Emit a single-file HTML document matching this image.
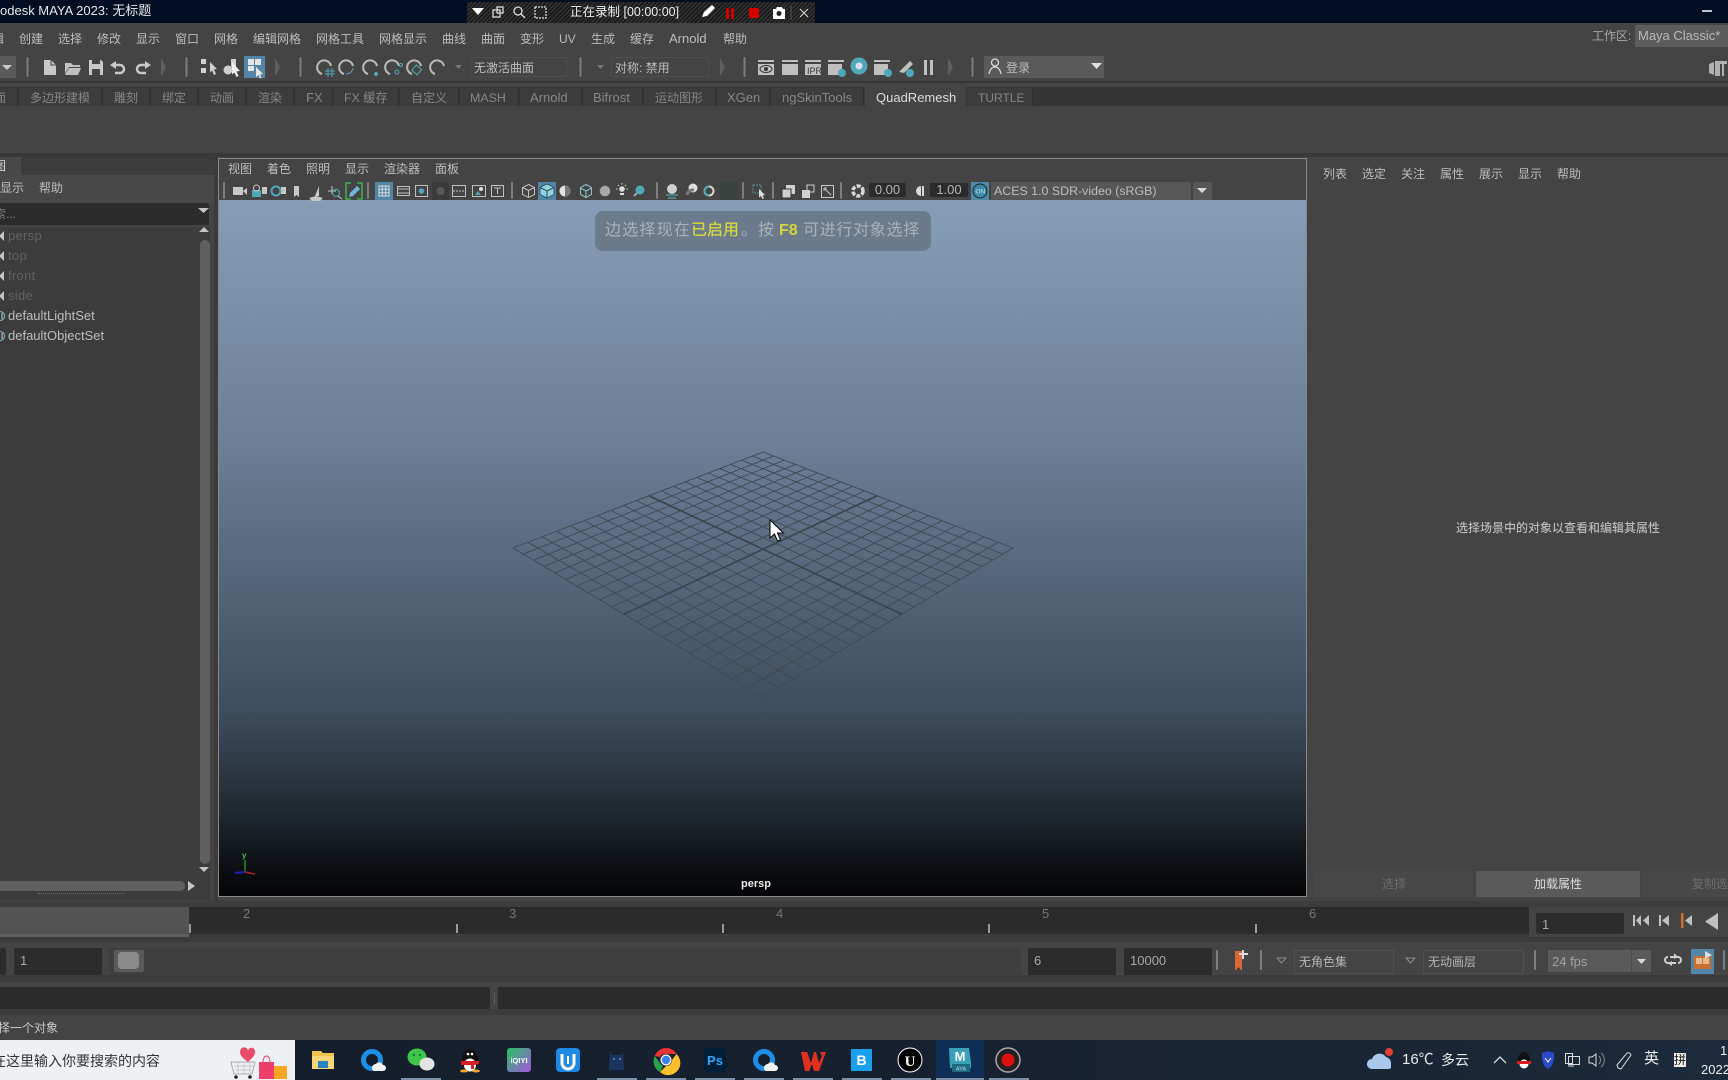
<!DOCTYPE html>
<html lang="zh"><head><meta charset="utf-8"><title>Autodesk MAYA 2023</title>
<style>
html,body{margin:0;padding:0;background:#444}
#p{position:relative;width:1728px;height:1080px;overflow:hidden;background:#444;font-family:"Liberation Sans","Noto Sans CJK SC",sans-serif;font-size:12px;color:#bdbdbd}
.b{position:absolute}
.t{position:absolute;white-space:nowrap;line-height:20px;height:20px}
.c{font-size:13px}
.tab{position:absolute;top:88px;height:18px;background:#3c3c3c;border-right:1px solid #2f2f2f;box-sizing:border-box}
.tl{position:absolute;top:88px;white-space:nowrap;line-height:20px;font-size:13px;color:#868686}
.f{position:absolute;background:#2c2c2c;border-radius:2px;box-sizing:border-box;color:#a8a8a8;font-size:13px;line-height:26px;padding-left:6px}
.o{position:absolute;left:8px;font-size:13px;line-height:18px;white-space:nowrap}
.h{position:absolute;top:221px;white-space:nowrap;line-height:20px;height:20px;font-size:16px;color:#a9b1b9}
.y{color:#d6d63c}
</style></head><body><div id="p">

<!-- title bar -->
<div class="b" style="left:0;top:0;width:1728px;height:23px;background:#000d22"></div>
<div class="t" style="left:0;top:1px;font-size:13px;color:#e8e8e8">odesk MAYA 2023: 无标题</div>
<div class="b" style="left:467px;top:2px;width:348px;height:21px;background:repeating-linear-gradient(135deg,#3a3a3a 0 1px,#1b1b1b 1px 3px)"></div>
<div class="t" style="left:570px;top:2px;font-size:12.500px;color:#eee">正在录制 [00:00:00]</div>

<!-- menu -->
<div class="t" style="left:-8px;top:29px">辑</div>
<div class="t" style="left:19px;top:29px">创建</div><div class="t" style="left:58px;top:29px">选择</div><div class="t" style="left:97px;top:29px">修改</div><div class="t" style="left:136px;top:29px">显示</div><div class="t" style="left:175px;top:29px">窗口</div><div class="t" style="left:214px;top:29px">网格</div><div class="t" style="left:253px;top:29px">编辑网格</div><div class="t" style="left:316px;top:29px">网格工具</div><div class="t" style="left:379px;top:29px">网格显示</div><div class="t" style="left:442px;top:29px">曲线</div><div class="t" style="left:481px;top:29px">曲面</div><div class="t" style="left:520px;top:29px">变形</div><div class="t" style="left:559px;top:29px">UV</div><div class="t" style="left:591px;top:29px">生成</div><div class="t" style="left:630px;top:29px">缓存</div><div class="t" style="left:669px;top:29px;font-size:13px">Arnold</div><div class="t" style="left:723px;top:29px">帮助</div>
<div class="t" style="left:1592px;top:26px;color:#a8a8a8">工作区:</div>
<div class="b" style="left:1635px;top:25px;width:93px;height:22px;background:#5c5c5c"></div>
<div class="t" style="left:1638px;top:26px;font-size:13px;color:#b8b8b8">Maya Classic*</div>

<!-- toolbar -->
<div class="b" style="left:0;top:56px;width:16px;height:22px;background:#5a5a5a"></div>
<div class="b" style="left:244px;top:56px;width:21px;height:22px;background:#5285a6"></div>
<div class="b" style="left:470px;top:57px;width:97px;height:20px;background:#444;border:1px solid #4e4e4e;box-sizing:border-box"></div>
<div class="t" style="left:474px;top:58px">无激活曲面</div>
<div class="b" style="left:611px;top:57px;width:98px;height:20px;background:#444;border:1px solid #4e4e4e;box-sizing:border-box"></div>
<div class="t" style="left:615px;top:58px">对称: 禁用</div>
<div class="b" style="left:984px;top:56px;width:120px;height:22px;background:#5a5a5a"></div>
<div class="t" style="left:1006px;top:58px">登录</div>
<div class="b" style="left:0;top:81px;width:1728px;height:2px;background:#363636"></div>

<!-- shelf tabs -->
<div class="b" style="left:0;top:87px;width:1728px;height:19px;background:#353535"></div>
<div class="tab" style="left:0;width:18px"></div><div class="tab" style="left:19px;width:83px"></div><div class="tab" style="left:103px;width:47px"></div><div class="tab" style="left:151px;width:47px"></div><div class="tab" style="left:199px;width:47px"></div><div class="tab" style="left:247px;width:47px"></div><div class="tab" style="left:295px;width:38px"></div><div class="tab" style="left:334px;width:65px"></div><div class="tab" style="left:400px;width:59px"></div><div class="tab" style="left:460px;width:59px"></div><div class="tab" style="left:520px;width:62px"></div><div class="tab" style="left:583px;width:60px"></div><div class="tab" style="left:644px;width:72px"></div><div class="tab" style="left:717px;width:53px"></div><div class="tab" style="left:771px;width:93px"></div>
<div class="tab" style="left:865px;width:101px;background:#444;top:87px;height:19px;border:0"></div>
<div class="tab" style="left:967px;width:66px"></div>
<div class="tl" style="left:-6px;font-size:12px">面</div><div class="tl" style="left:30px;font-size:12px">多边形建模</div><div class="tl" style="left:114px;font-size:12px">雕刻</div><div class="tl" style="left:162px;font-size:12px">绑定</div><div class="tl" style="left:210px;font-size:12px">动画</div><div class="tl" style="left:258px;font-size:12px">渲染</div><div class="tl" style="left:306px">FX</div><div class="tl" style="left:344px;font-size:12.300px">FX 缓存</div><div class="tl" style="left:411px;font-size:12px">自定义</div><div class="tl" style="left:470px;font-size:12.400px">MASH</div><div class="tl" style="left:530px">Arnold</div><div class="tl" style="left:593px">Bifrost</div><div class="tl" style="left:655px;font-size:12px">运动图形</div><div class="tl" style="left:727px">XGen</div><div class="tl" style="left:782px">ngSkinTools</div><div class="tl" style="left:876px;color:#dcdcdc">QuadRemesh</div><div class="tl" style="left:978px;font-size:12px">TURTLE</div>
<div class="b" style="left:0;top:153px;width:1728px;height:4px;background:#383838"></div>

<!-- outliner -->
<div class="b" style="left:0;top:157px;width:214px;height:18px;background:#3c3c3c"></div>
<div class="b" style="left:0;top:157px;width:21px;height:18px;background:#484848"></div>
<div class="t" style="left:-6px;top:156px;color:#ddd">图</div>
<div class="b" style="left:0;top:175px;width:214px;height:28px;background:#484848"></div>
<div class="t" style="left:0;top:178px">显示</div><div class="t" style="left:39px;top:178px">帮助</div>
<div class="b" style="left:0;top:203px;width:209px;height:22px;background:#2b2b2b;border-radius:0 2px 2px 0"></div>
<div class="t" style="left:-6px;top:204px;color:#7a7a7a">索...</div>
<div class="b" style="left:0;top:227px;width:210px;height:673px;background:#3c3c3c"></div>
<div class="o" style="top:227px;color:#626262;letter-spacing:.3px">persp</div><div class="o" style="top:247px;color:#626262;letter-spacing:.3px">top</div><div class="o" style="top:267px;color:#626262;letter-spacing:.3px">front</div><div class="o" style="top:287px;color:#626262;letter-spacing:.3px">side</div><div class="o" style="top:307px;color:#bdbdbd">defaultLightSet</div><div class="o" style="top:327px;color:#bdbdbd">defaultObjectSet</div>
<div class="b" style="left:200px;top:240px;width:10px;height:624px;background:#5f5f5f;border-radius:5px"></div>
<div class="b" style="left:0;top:881px;width:185px;height:10px;background:#5f5f5f;border-radius:0 5px 5px 0"></div>
<div class="b" style="left:38px;top:893px;width:86px;height:0;border-top:1px dotted #6b6b6b"></div>
<div class="b" style="left:214px;top:153px;width:4px;height:748px;background:#3b3b3b"></div>

<!-- viewport -->
<div class="b" style="left:218px;top:158px;width:1089px;height:739px;border:1px solid #888;box-sizing:border-box;background:#444"></div>
<div class="b" style="left:219px;top:200px;width:1087px;height:696px;background:linear-gradient(#879db7 0%,#6b7f96 35%,#3f4e5e 73%,#1f2830 88%,#030405 100%)"></div>
<div class="t" style="left:228px;top:159px">视图</div><div class="t" style="left:267px;top:159px">着色</div><div class="t" style="left:306px;top:159px">照明</div><div class="t" style="left:345px;top:159px">显示</div><div class="t" style="left:384px;top:159px">渲染器</div><div class="t" style="left:435px;top:159px">面板</div>
<div class="b" style="left:375px;top:182px;width:18px;height:18px;background:#5285a6"></div>
<div class="b" style="left:432px;top:182px;width:17px;height:18px;background:#3a3a3a"></div>
<div class="b" style="left:538px;top:182px;width:18px;height:18px;background:#5285a6"></div>
<div class="b" style="left:720px;top:182px;width:18px;height:18px;background:#3a4340"></div>
<div class="b" style="left:869px;top:183px;width:37px;height:14px;background:#2b2b2b;border-radius:2px;color:#b5b5b5;font-size:13px;line-height:14px;text-align:center">0.00</div>
<div class="b" style="left:930px;top:183px;width:38px;height:14px;background:#2b2b2b;border-radius:2px;color:#b5b5b5;font-size:13px;line-height:14px;text-align:center">1.00</div>
<div class="b" style="left:971px;top:182px;width:18px;height:18px;background:#4f8aa8"></div>
<div class="b" style="left:991px;top:182px;width:200px;height:18px;background:#575757"></div>
<div class="b" style="left:1193px;top:182px;width:19px;height:18px;background:#575757"></div>
<div class="t" style="left:994px;top:181px;font-size:12.400px;color:#bdbdbd">ACES 1.0 SDR-video (sRGB)</div>
<div class="b" style="left:595px;top:211px;width:336px;height:40px;background:#6b7b8c;border-radius:8px"></div>
<div class="h" style="left:605px;letter-spacing:1.200px">边选择现在</div>
<div class="h y" style="left:691px;font-weight:500">已启用</div>
<div class="h" style="left:741px">。</div>
<div class="h" style="left:758px">按</div>
<div class="h y" style="left:779px;font-weight:bold">F8</div>
<div class="h" style="left:803px;letter-spacing:.7px">可进行对象选择</div>
<div class="t" style="left:741px;top:874px;font-size:11px;font-weight:bold;color:#e8e8e8">persp</div>

<!-- attribute panel -->
<div class="t" style="left:1323px;top:164px">列表</div><div class="t" style="left:1362px;top:164px">选定</div><div class="t" style="left:1401px;top:164px">关注</div><div class="t" style="left:1440px;top:164px">属性</div><div class="t" style="left:1479px;top:164px">展示</div><div class="t" style="left:1518px;top:164px">显示</div><div class="t" style="left:1557px;top:164px">帮助</div>
<div class="t" style="left:1456px;top:518px;color:#b8b8b8;font-weight:500">选择场景中的对象以查看和编辑其属性</div>
<div class="b" style="left:1315px;top:871px;width:158px;height:26px;background:#484848"></div>
<div class="b" style="left:1476px;top:871px;width:164px;height:26px;background:#5a5a5a"></div>
<div class="b" style="left:1643px;top:871px;width:85px;height:26px;background:#484848"></div>
<div class="t" style="left:1382px;top:874px;color:#6d6d6d">选择</div><div class="t" style="left:1534px;top:874px;color:#ddd">加载属性</div><div class="t" style="left:1692px;top:874px;color:#6d6d6d">复制选项卡</div>

<!-- bottom bands -->
<div class="b" style="left:0;top:901px;width:1728px;height:6px;background:#3d3d3d"></div>
<div class="b" style="left:0;top:907px;width:1529px;height:27px;background:#2b2b2b"></div>
<div class="b" style="left:189px;top:934px;width:1340px;height:3px;background:#3c3c3c"></div>
<div class="b" style="left:0;top:907px;width:189px;height:30px;background:linear-gradient(#535353 0 27px,#5e5e5e 27px)"></div>
<div class="t" style="left:243px;top:904px;font-size:13px;color:#757575">2</div><div class="t" style="left:509px;top:904px;font-size:13px;color:#757575">3</div><div class="t" style="left:776px;top:904px;font-size:13px;color:#757575">4</div><div class="t" style="left:1042px;top:904px;font-size:13px;color:#757575">5</div><div class="t" style="left:1309px;top:904px;font-size:13px;color:#757575">6</div>
<div class="b" style="left:189px;top:924px;width:2px;height:9px;background:#999"></div><div class="b" style="left:456px;top:924px;width:2px;height:9px;background:#999"></div><div class="b" style="left:722px;top:924px;width:2px;height:9px;background:#999"></div><div class="b" style="left:988px;top:924px;width:2px;height:9px;background:#999"></div><div class="b" style="left:1255px;top:924px;width:2px;height:9px;background:#999"></div>
<div class="f" style="left:1536px;top:913px;width:88px;height:21px;line-height:23px">1</div>
<div class="b" style="left:0;top:937px;width:1728px;height:5px;background:#3b3b3b"></div>

<div class="f" style="left:0;top:948px;width:6px;height:27px"></div>
<div class="f" style="left:14px;top:948px;width:88px;height:27px">1</div>
<div class="b" style="left:109px;top:948px;width:912px;height:27px;background:#3f3f3f"></div>
<div class="b" style="left:114px;top:950px;width:30px;height:22px;background:#5a5a5a;border-radius:2px"></div>
<div class="b" style="left:118px;top:952px;width:21px;height:17px;background:#8a8a8a;border-radius:4px"></div>
<div class="f" style="left:1028px;top:948px;width:88px;height:27px">6</div>
<div class="f" style="left:1124px;top:948px;width:88px;height:27px">10000</div>
<div class="b" style="left:1294px;top:950px;width:100px;height:24px;border:1px solid #505050;box-sizing:border-box"></div>
<div class="t" style="left:1299px;top:952px;color:#b5b5b5">无角色集</div>
<div class="b" style="left:1423px;top:950px;width:101px;height:24px;border:1px solid #505050;box-sizing:border-box"></div>
<div class="t" style="left:1428px;top:952px;color:#b5b5b5">无动画层</div>
<div class="b" style="left:1548px;top:950px;width:103px;height:22px;background:#5a5a5a"></div>
<div class="b" style="left:1631px;top:950px;width:1px;height:22px;background:#4a4a4a"></div>
<div class="t" style="left:1552px;top:952px;font-size:13px;color:#a3a3a3">24 fps</div>
<div class="b" style="left:1691px;top:949px;width:23px;height:25px;background:#5285a6"></div>
<div class="b" style="left:0;top:975px;width:1728px;height:7px;background:#3c3c3c"></div>
<div class="b" style="left:0;top:987px;width:490px;height:22px;background:#2b2b2b;border-radius:0 2px 2px 0"></div>
<div class="b" style="left:498px;top:987px;width:1230px;height:22px;background:#2b2b2b"></div>
<div class="b" style="left:494px;top:992px;height:11px;width:0;border-left:1px dotted #777"></div>
<div class="b" style="left:0;top:1009px;width:1728px;height:6px;background:#3c3c3c"></div>
<div class="t" style="left:-14px;top:1018px;color:#c8c8c8">选择一个对象</div>

<!-- taskbar -->
<div class="b" style="left:0;top:1040px;width:1728px;height:40px;background:linear-gradient(90deg,#141d2b,#17212f 60%,#1c2a3b)"></div>
<div class="b" style="left:0;top:1040px;width:295px;height:40px;background:#eef1f4"></div>
<div class="t" style="left:-8px;top:1051px;font-size:14px;color:#333">在这里输入你要搜索的内容</div>
<div class="b" style="left:936px;top:1040px;width:48px;height:40px;background:#0f2e55"></div>
<div class="t" style="left:1402px;top:1050px;font-size:15px;color:#e8e8e8">16℃</div>
<div class="t" style="left:1441px;top:1050px;font-size:14px;color:#e8e8e8">多云</div>
<div class="t" style="left:1644px;top:1049px;font-size:15px;color:#eee">英</div>
<div class="t" style="left:1674px;top:1050px;font-size:12px;color:#111;background:#eee;line-height:14px;height:14px;margin-top:3px;padding:0 0">拼</div>
<div class="t" style="left:1720px;top:1041px;font-size:13px;color:#eee">17</div>
<div class="t" style="left:1701px;top:1060px;font-size:13px;color:#eee">2022</div>

<!-- vector overlay -->
<svg class="b" style="left:0;top:0" width="1728" height="1080" viewBox="0 0 1728 1080" xmlns="http://www.w3.org/2000/svg">
<defs>
<g id="g" fill="none">
<path stroke="#3f4952" stroke-width=".9" d="M763 452L513 548M773.6 456.1L523.1 554M784.3 460.2L533.4 560.2M795.2 464.4L543.9 566.4M806.3 468.6L554.7 572.8M817.6 473L565.6 579.4M829.1 477.4L576.8 586M840.7 481.8L588.3 592.9M852.6 486.4L600 599.8M864.7 491L611.9 606.9M889.5 500.6L636.6 621.7M902.2 505.5L649.4 629.3M915.2 510.4L662.4 637.1M928.4 515.5L675.8 645M941.9 520.7L689.5 653.2M955.6 525.9L703.5 661.5M969.5 531.3L717.8 670.1M983.7 536.8L732.5 678.8M998.2 542.3L747.6 687.8M1013 548L763 697"/>
<path stroke="#3c444c" stroke-width="1.700" d="M877 495.8L624.1 614.2"/>
</g>
<g id="q"><circle r="8.500" fill="none" stroke="#1e8fe8" stroke-width="5"/><path d="M1 10a4 4 0 0 1 4-4a4 4 0 0 1 7 1a3 3 0 0 1 0 6H3a3 3 0 0 1-2-3z" fill="#f2f2f2" transform="translate(-1 -2)"/></g>
</defs>
<use href="#g"/><use href="#g" transform="matrix(-1 0 0 1 1526 0)"/>
<path d="M770 520v18l4.500-4 3 7 3-1.200-3-6.800h6z" fill="#fff" stroke="#000" stroke-width="1"/>

<!-- record bar icons -->
<path d="M472 8h12l-6 7z" fill="#fff"/>
<g fill="none" stroke="#ddd" stroke-width="1.300"><rect x="493" y="10" width="7" height="7"/><rect x="497" y="7" width="6" height="6"/><circle cx="518" cy="11" r="4"/><path d="M521 14l4 4"/><path stroke-dasharray="2 1" d="M535 7h11v11h-11z"/></g>
<path d="M702 17l2-5 8-7 3 3-8 8z" fill="#fff"/>
<rect x="726" y="8" width="3" height="11" fill="#c00"/><rect x="731" y="8" width="3" height="11" fill="#c00"/><rect x="749" y="8" width="10" height="10" fill="#d40000"/>
<path d="M773 9h3l1-2h5l1 2h2v10h-12z" fill="#fff"/><circle cx="779" cy="13.500" r="2.500" fill="#222"/>
<path d="M791 6v14" stroke="#555"/><path d="M800 9l8 8M808 9l-8 8" stroke="#ddd"/>
<path d="M1702 11h10" stroke="#fff" stroke-width="1.500"/>

<!-- toolbar -->
<path d="M2 65h10l-5 5z" fill="#c8c8c8"/>
<g fill="#7d7d7d"><rect x="26.500" y="57" width="2" height="20" rx="1"/><rect x="185.500" y="57" width="2" height="20" rx="1"/><rect x="299.500" y="57" width="2" height="20" rx="1"/><rect x="579.500" y="57" width="2" height="20" rx="1"/><rect x="743.500" y="57" width="2" height="20" rx="1"/><rect x="971.500" y="57" width="2" height="20" rx="1"/></g>
<g fill="#5f5f5f"><path d="M161 58l5 9-5 9zM275 58l5 9-5 9zM720 58l5 9-5 9zM948 58l5 9-5 9z"/></g>
<path d="M44 60h7l5 5v10H44z" fill="#c8c8c8"/><path d="M51 60v5h5" fill="none" stroke="#444"/>
<path d="M65 63h6l2 2h7v2H69l-4 7zM65 75l4-7h12l-3 7z" fill="#c0c0c0"/>
<path d="M89 60h12l2 2v13H89z" fill="#c8c8c8"/><rect x="92" y="60" width="8" height="4" fill="#444"/><rect x="92" y="69" width="8" height="6" fill="#444"/>
<path d="M113 65h7a4 4 0 0 1 0 8h-5" fill="none" stroke="#c8c8c8" stroke-width="2.500"/><path d="M116 61v8l-6-4z" fill="#c8c8c8"/>
<path d="M148 65h-7a4 4 0 0 0 0 8h5" fill="none" stroke="#c8c8c8" stroke-width="2.500"/><path d="M145 61v8l6-4z" fill="#c8c8c8"/>
<g fill="#d0d0d0"><rect x="201" y="59" width="5" height="5"/><rect x="201" y="68" width="5" height="5"/><path d="M210 62l7 7-3 .5 2 4.500-2 1-2-4.500-2 2z"/><circle cx="228" cy="70" r="4.500"/><rect x="231" y="59" width="5" height="8"/><path d="M232 62l8 9-3.500 .5 2 4.500-2 1-2-4.500-2.500 2z" fill="#eee"/></g>
<g fill="#e4e4e4"><rect x="248" y="59" width="6" height="6"/><rect x="255" y="59" width="6" height="6"/><rect x="248" y="66" width="6" height="5"/><path d="M256 67l7 7-3 .5 1.500 3.500-1.500 .5-1.500-3.500-2.500 2z"/></g>
<g fill="none" stroke="#b8b8b8" stroke-width="2"><path d="M322 74a7 7 0 1 1 9-8"/><path d="M344 74a7 7 0 1 1 9-8"/><path d="M368 74a7 7 0 1 1 9-8"/><path d="M390 74a7 7 0 1 1 9-8"/><path d="M412 74a7 7 0 1 1 9-8"/><path d="M435 74a7 7 0 1 1 9-8"/></g>
<g fill="none" stroke="#4fa8b8" stroke-width="1"><path d="M328 68v9M332 68v9M325 71h10M325 74h10"/><path d="M346 74c4 0 6-2 7-6"/><circle cx="376" cy="74" r="1.500" fill="#4fa8b8"/><circle cx="397" cy="72" r="2"/><circle cx="401" cy="65" r="1.500"/><rect x="413" y="66" width="7" height="7" transform="rotate(40 416 70)"/></g>
<path d="M455 65h7l-3.500 4zM597 65h7l-3.500 4z" fill="#777"/>
<!-- render icons -->
<g fill="#c0c0c0"><path d="M758 60h16v2h-16zM782 60h16v2h-16zM805 60h16v2h-16zM828 60h16v2h-16zM874 60h16v2h-16z"/><rect x="758" y="64" width="16" height="11"/><rect x="782" y="64" width="16" height="11"/><rect x="805" y="64" width="16" height="11"/><rect x="828" y="64" width="14" height="11"/><rect x="874" y="64" width="14" height="11"/><rect x="924" y="60" width="3" height="15"/><rect x="930" y="60" width="3" height="15"/></g>
<ellipse cx="766" cy="69" rx="6" ry="3.500" fill="none" stroke="#333"/><circle cx="766" cy="69" r="2" fill="#333"/>
<text x="807" y="74" font-size="9" font-family="Liberation Sans" fill="#333">IPR</text>
<circle cx="842" cy="73" r="4" fill="#4fa8b8"/><circle cx="888" cy="73" r="4" fill="#4fa8b8"/>
<circle cx="859" cy="66" r="8.500" fill="#4fa8b8"/><circle cx="859" cy="66" r="3.500" fill="#dde"/>
<path d="M899 72l11-11 3 3-9 9z" fill="#c0c0c0"/><circle cx="910" cy="73" r="4" fill="#4fa8b8"/>
<circle cx="995" cy="62.500" r="3.500" fill="none" stroke="#ddd" stroke-width="1.200"/><path d="M989 74c1-5 3-7 6-7s5 2 6 7" fill="none" stroke="#ddd" stroke-width="1.200"/>
<path d="M1091 63h11l-5.500 6z" fill="#e0e0e0"/>
<!-- far right -->
<g fill="#b0b0b0"><path d="M1715 61h12v3h-3v12h-2V64h-2v12h-5z"/><path d="M1709 64l5-2v13l-5-2z"/></g>
<!-- outliner -->
<path d="M198 208h11l-5.500 5zM199 232l5-5 5 5zM199 867l5 5 5-5zM188 881l7 5-7 5z" fill="#c4c4c4"/>
<path d="M-1 236l5-5v10zM-1 256l5-5v10zM-1 276l5-5v10zM-1 296l5-5v10z" fill="#c4c4c4"/>
<g fill="none" stroke="#6fa5b8" stroke-width="1.300"><circle cx="0" cy="316" r="4.500"/><circle cx="0" cy="336" r="4.500"/></g>
<path d="M2 313v6M2 333v6" stroke="#ccc"/>
<!-- viewport icons -->
<g fill="#7d7d7d"><rect x="223" y="182" width="2" height="17" rx="1"/><rect x="367" y="182" width="2" height="17" rx="1"/><rect x="511" y="182" width="2" height="17" rx="1"/><rect x="656" y="182" width="2" height="17" rx="1"/><rect x="742" y="182" width="2" height="17" rx="1"/><rect x="772" y="182" width="2" height="17" rx="1"/><rect x="840" y="182" width="2" height="17" rx="1"/></g>
<g fill="#c8c8c8"><rect x="233" y="187" width="10" height="8"/><path d="M243 191l4-3v7z"/><rect x="262" y="187" width="5" height="7"/><rect x="281" y="187" width="5" height="7"/><path d="M294 186h5v11l-2.500-2-2.500 2z"/><path d="M309 198l7-2 7 2-3 3h-8zM315 196l4-10v10z"/></g>
<rect x="252" y="190" width="9" height="7" fill="#4fa8b8"/><circle cx="256.500" cy="188" r="3" fill="none" stroke="#c8c8c8"/><circle cx="276" cy="191" r="4.500" fill="none" stroke="#4fa8b8" stroke-width="2"/>
<path d="M328 191h8M332 186v8" stroke="#ccc"/><circle cx="336" cy="193" r="3.500" fill="none" stroke="#4fa8b8"/><path d="M338 196l4 3" stroke="#ccc"/>
<path d="M351 183h-5v16h5M357 183h5v16h-5" fill="none" stroke="#3ec44a" stroke-width="1.300"/><path d="M349 197l1-4 7-7 3 3-7 7z" fill="#6fb6d8"/>
<g fill="none" stroke="#d8d8d8"><path d="M379 186h10v10h-10zM382.300 186v10M385.700 186v10M379 189.300h10M379 192.700h10"/></g>
<g fill="none" stroke="#c0c0c0"><rect x="397.500" y="186.500" width="12" height="9"/><path d="M397 189h13M397 193h13"/><rect x="415.500" y="185.500" width="12" height="11"/><rect x="452.500" y="185.500" width="13" height="11"/><rect x="472.500" y="185.500" width="13" height="11"/><rect x="491.500" y="185.500" width="12" height="11"/><path d="M494 188h7M497.500 188v6"/><path stroke-dasharray="2 1" d="M453 191h12"/></g>
<circle cx="421.500" cy="191" r="2.800" fill="#4fa8b8"/><circle cx="440.500" cy="191" r="4" fill="#5a5a5a"/><path d="M475 195l3-4 3 4z" fill="#4fa8b8"/><circle cx="481" cy="189" r="2" fill="#ddd"/>
<g fill="none" stroke="#c4c4c4"><path d="M528.500 184.500l6 3v7l-6 3-6-3v-7zM522.500 187.500l6 3 6-3M528.500 190.500v7"/></g>
<path d="M547 184l7 3.500v7l-7 3.500-7-3.500v-7z" fill="#8fd4e0" stroke="#123" stroke-width=".6"/><path d="M540 187.500l7 3.500 7-3.500M547 191v7" fill="none" stroke="#345"/>
<circle cx="565" cy="191" r="5.500" fill="#e0e0e0"/><path d="M565 185.500a5.500 5.500 0 0 1 0 11z" fill="#777"/>
<g fill="none" stroke="#8fc0cc"><path d="M586 184.500l5.500 3v7l-5.500 3-5.500-3v-7z"/><path d="M580.500 188l5.500 3 5.500-3M586 191v6"/></g>
<circle cx="605" cy="191" r="5.500" fill="#a8a8a8" stroke-dasharray="1 1" stroke="#444"/>
<circle cx="622" cy="189" r="2.800" fill="#ddd"/><path d="M622 183v1.500M616 189h1.500M626.500 189h1.500M618 185l1 1M626 185l-1 1" stroke="#ddd"/><path d="M620 193h4v2h-4z" fill="#ddd"/>
<circle cx="640" cy="190" r="4.500" fill="#4fa8b8"/><path d="M634 196l3-3" stroke="#aaa" stroke-width="2"/>
<circle cx="672" cy="189" r="5" fill="#d0d0d0"/><path d="M666 195h12M668 198h8" stroke="#4f9aa8" stroke-width="1.500"/>
<circle cx="693" cy="188" r="4.500" fill="#ddd"/><path d="M687 195a6 6 0 0 1 7-5" stroke="#777" stroke-width="3" fill="none"/>
<circle cx="709" cy="191" r="4.500" fill="none" stroke="#d8d8d8" stroke-width="2"/><path d="M709 186.500a4.500 4.500 0 0 0 0 9" fill="none" stroke="#4fa8b8" stroke-width="2"/>
<rect x="753" y="185" width="8" height="8" fill="none" stroke="#4f9aa8" stroke-dasharray="2 1"/><path d="M759 189l6 6-2.500 .5 1.500 3-1.500 .5-1.500-3-2 1.500z" fill="#ddd"/>
<g fill="#d0d0d0"><rect x="786" y="185" width="9" height="9"/><rect x="782" y="189" width="9" height="9" stroke="#333"/><rect x="807" y="185" width="7" height="7" fill="none" stroke="#d0d0d0"/><rect x="802" y="190" width="8" height="8"/></g>
<rect x="821.500" y="185.500" width="12" height="12" fill="none" stroke="#c8c8c8"/><path d="M824 188l7 7M824 188h3M824 188v3" stroke="#c8c8c8" fill="none"/>
<circle cx="858" cy="191" r="5" fill="none" stroke="#d8d8d8" stroke-width="3.500" stroke-dasharray="4 1.500"/>
<path d="M921 186a5 5 0 0 0 0 10zM922 186h2v10h-2z" fill="#d8d8d8"/>
<circle cx="980" cy="191" r="7" fill="#3c8aa8" stroke="#222"/><text x="975.500" y="193.500" font-size="6.500" font-family="Liberation Sans" fill="#b8e8f0">ON</text>
<path d="M1197 188h10l-5 5z" fill="#d8d8d8"/>
<!-- axis -->
<path d="M245 872v-12" stroke="#3cc050"/><path d="M245 872l-10 1" stroke="#2020c0" stroke-width="2"/><path d="M245 872l10 2" stroke="#b02020" stroke-width="1.500"/>
<text x="242" y="858" font-size="8" font-family="Liberation Sans" font-weight="bold" fill="#3cc050">y</text>
<!-- timeline controls -->
<g fill="#c0c0c0"><rect x="1633" y="915" width="2" height="11"/><path d="M1641 915v11l-5-5.500zM1649 915v11l-6-5.500zM1669 915v11l-7-5.500zM1692 915v11l-7-5.500zM1718 913v17l-13-8.500z"/><rect x="1659" y="915" width="2" height="11"/></g>
<rect x="1681" y="913" width="2.500" height="15" fill="#d07030"/>
<g fill="#7d7d7d"><rect x="1216" y="950" width="2" height="20" rx="1"/><rect x="1260" y="950" width="2" height="20" rx="1"/><rect x="1534" y="950" width="2" height="20" rx="1"/><rect x="1723" y="950" width="2" height="20" rx="1"/></g>
<path d="M1235 951h7v20l-3.500-4-3.500 4z" fill="#d86838"/><path d="M1243 950v9M1239 954h9" stroke="#ddd" stroke-width="2"/>
<path d="M1277 958h9l-4.500 5zM1406 958h9l-4.500 5z" fill="none" stroke="#8a8a8a"/>
<path d="M1637 959h9l-4.500 5z" fill="#d8d8d8"/>
<path d="M1670 957h8a3 3 0 0 1 0 6M1676 963h-8a3 3 0 0 1 0-6" fill="none" stroke="#d0d0d0" stroke-width="2"/><path d="M1674 953l4 4-4 2zM1672 961v5l-4-2.500z" fill="#d0d0d0"/>
<rect x="1694" y="956" width="17" height="13" fill="#c87030"/><rect x="1696" y="958" width="6" height="6" fill="#e8b88a"/><rect x="1703" y="958" width="6" height="6" fill="#e8b88a"/><path d="M1705 951l7 4-7 4z" fill="#ddd"/>
<!-- search decoration -->
<path d="M231 1062h24l-3 12h-18z" fill="none" stroke="#aaa"/><path d="M234 1066h19M236 1070h15M238 1062v12M244 1062v12M250 1062v12" stroke="#bbb" stroke-width=".7"/><circle cx="236" cy="1077" r="1.800" fill="#222"/><circle cx="250" cy="1077" r="1.800" fill="#222"/>
<path d="M240 1052c0-6 8-6 8-1 1-5 8-4 7 2-1 4-4 6-7 9-4-3-8-6-8-10z" fill="#ea4d6a"/>
<path d="M259 1062h15v17h-15z" fill="#ee3f6c"/><path d="M263 1062c0-8 7-8 7 0" fill="none" stroke="#ee3f6c"/><path d="M274 1066h13v13h-13z" fill="#f5a623"/>
<!-- taskbar icons -->
<path d="M312 1051h9l2 2h11v16h-22z" fill="#f0c24b"/><rect x="312" y="1056" width="22" height="13" fill="#f5d77a"/><rect x="318" y="1061" width="10" height="7" fill="#2b83c6"/>
<use href="#q" transform="translate(372 1060)"/><use href="#q" transform="translate(764 1060)"/>
<ellipse cx="417" cy="1057" rx="9.500" ry="8.500" fill="#3ec54a"/><ellipse cx="427" cy="1064" rx="7.500" ry="6.500" fill="#e4e4e4"/><circle cx="414" cy="1055" r="1.200" fill="#174"/><circle cx="420" cy="1055" r="1.200" fill="#174"/>
<ellipse cx="470" cy="1060" rx="8" ry="11" fill="#111"/><ellipse cx="470" cy="1065" rx="6" ry="6.500" fill="#fff"/><path d="M461 1061h18v3l-5 1v4h-3v-4h-10z" fill="#d81e1e"/><ellipse cx="464" cy="1071" rx="4" ry="1.500" fill="#f5a623"/><ellipse cx="476" cy="1071" rx="4" ry="1.500" fill="#f5a623"/><circle cx="468" cy="1054" r="1.300" fill="#fff"/><circle cx="472" cy="1054" r="1.300" fill="#fff"/>
<defs><linearGradient id="iq" x1="0" y1="0" x2="1" y2="1"><stop offset="0" stop-color="#22c35e"/><stop offset="1" stop-color="#a555e0"/></linearGradient></defs>
<rect x="507" y="1048" width="24" height="24" rx="3" fill="url(#iq)"/><text x="519" y="1063" text-anchor="middle" font-size="7.500" font-weight="bold" font-family="Liberation Sans" fill="#fff">iQIYI</text>
<rect x="556" y="1048" width="24" height="24" rx="4" fill="#1e88e5"/><path d="M562 1054v9a6 6 0 0 0 12 0v-9" fill="none" stroke="#fff" stroke-width="3"/><path d="M568 1056v8" stroke="#fff" stroke-width="2"/>
<path d="M610 1052l2 3h9l2-3 1 18h-15z" fill="#1c3560"/><circle cx="614" cy="1059" r="1" fill="#6a88bb"/><circle cx="620" cy="1059" r="1" fill="#6a88bb"/>
<path d="M666 1048a12 12 0 0 1 10.400 6H666z" fill="#e33"/><path d="M654.800 1056A12 12 0 0 1 676.400 1054H666a6 6 0 0 0-6 3l-5.200-1z" fill="#e33"/><path d="M654.800 1056l5.200 7a7 7 0 0 0 3 3l-3 6a12 12 0 0 1-5.200-16z" fill="#2ba24c"/><path d="M676.400 1054a12 12 0 0 1-16.400 18l6-6a6 6 0 0 0 6-6z" fill="#fbc02d"/><circle cx="666" cy="1060" r="5.500" fill="#fff"/><circle cx="666" cy="1060" r="4.200" fill="#3f7fe8"/>
<rect x="704" y="1048" width="22" height="24" rx="4" fill="#001e36"/><text x="715" y="1065" text-anchor="middle" font-size="13" font-weight="bold" font-family="Liberation Sans" fill="#31a8ff">Ps</text>
<path d="M801 1052h6l4 11 3-11h2l3 11 3-7-2-4h6l-7 19h-5l-2-7-3 7h-4z" fill="#e1301e"/>
<rect x="851" y="1049" width="21" height="22" fill="#1a9fee"/><text x="861.500" y="1065" text-anchor="middle" font-size="14" font-weight="bold" font-family="Liberation Sans" fill="#fff">B</text>
<circle cx="910" cy="1060" r="12" fill="#000" stroke="#fff" stroke-width="1"/><text x="910" y="1066" text-anchor="middle" font-size="15" font-weight="bold" font-family="Liberation Serif" fill="#fff">U</text>
<path d="M949 1048h20l2 14v6h-21z" fill="#3a9fb8"/><rect x="952" y="1064" width="18" height="8" fill="#1c6a80"/><text x="960" y="1061" text-anchor="middle" font-size="13" font-weight="bold" font-family="Liberation Sans" fill="#fff">M</text><text x="961" y="1070.500" text-anchor="middle" font-size="5.500" font-family="Liberation Sans" fill="#cde">AYA</text>
<circle cx="1008" cy="1060" r="12" fill="#222" stroke="#aaa" stroke-width="1.500"/><circle cx="1008" cy="1060" r="6.500" fill="#e01010"/>
<g fill="#7c90aa"><rect x="401" y="1078" width="40" height="2"/><rect x="597" y="1078" width="40" height="2"/><rect x="646" y="1078" width="40" height="2"/><rect x="695" y="1078" width="40" height="2"/><rect x="744" y="1078" width="40" height="2"/><rect x="793" y="1078" width="40" height="2"/><rect x="842" y="1078" width="40" height="2"/><rect x="891" y="1078" width="40" height="2"/><rect x="936" y="1078" width="48" height="2"/><rect x="989" y="1078" width="40" height="2"/></g>
<!-- tray -->
<path d="M1369 1068a5 5 0 0 1 3-9 8 8 0 0 1 14-2 6 6 0 0 1 5 6v5l-2 1h-18z" fill="#a8c8ec"/><circle cx="1389" cy="1052" r="4" fill="#e04030"/>
<path d="M1494 1063l6-6 6 6" fill="none" stroke="#ddd" stroke-width="1.300"/>
<ellipse cx="1524" cy="1060" rx="6" ry="8" fill="#111"/><ellipse cx="1524" cy="1064" rx="4.500" ry="4.500" fill="#fff"/><path d="M1517 1061h14v3h-14z" fill="#d81e1e"/>
<path d="M1548 1051l6 2c1 8-2 14-6 16-4-2-7-8-6-16z" fill="#2b4bcb"/><path d="M1545 1058l3 4 3-4" fill="none" stroke="#fff"/>
<g fill="none" stroke="#ddd"><rect x="1565.500" y="1053.500" width="7" height="10"/><rect x="1568.500" y="1056.500" width="11" height="8"/><path d="M1568 1066h6"/><path d="M1589 1057h3l4-3v12l-4-3h-3z"/><path d="M1599 1056a6 6 0 0 1 0 8M1601 1053a9 9 0 0 1 0 14" stroke="#888"/><path d="M1618 1068l3 1 10-14a3 3 0 0 0-4-2l-10 12z"/></g>
</svg>
</div></body></html>
